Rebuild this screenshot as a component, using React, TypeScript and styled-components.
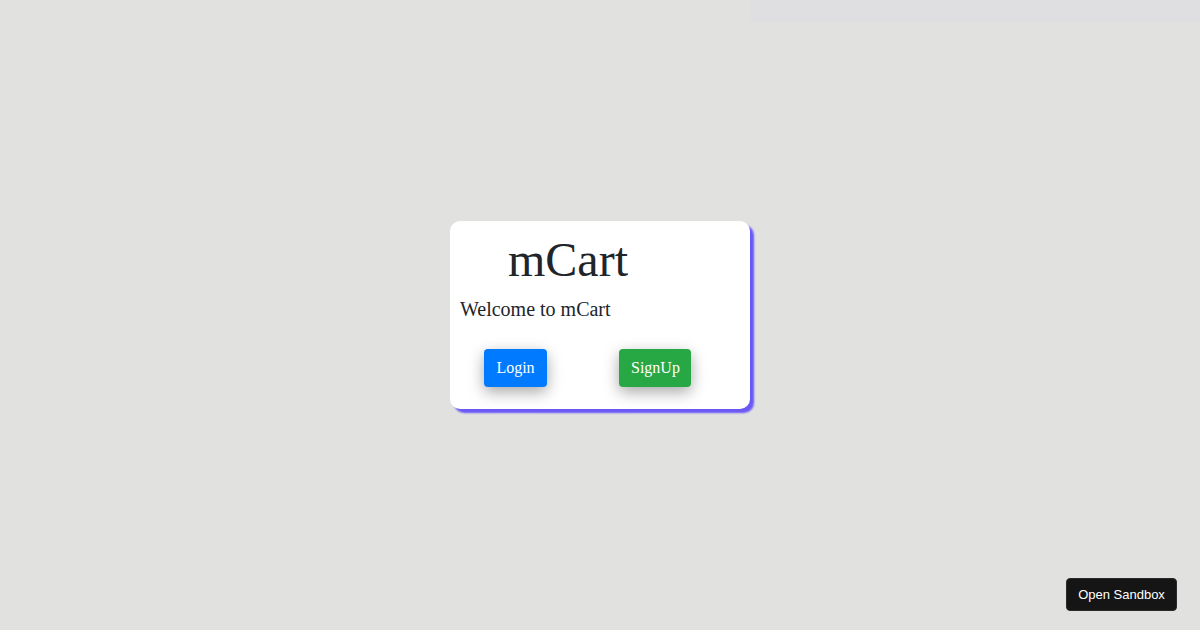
import React from "react";
import styled, { createGlobalStyle } from "styled-components";

const Global = createGlobalStyle`
  html, body { margin: 0; padding: 0; }
  body {
    background: #e1e1e0;
    font-family: "Liberation Serif", "Times New Roman", serif;
    width: 1200px;
    height: 630px;
    overflow: hidden;
  }
`;

const Page = styled.div`
  position: relative;
  width: 1200px;
  height: 630px;
  display: flex;
  align-items: flex-start;
  justify-content: center;
  padding-top: 221px;
  box-sizing: border-box;
`;

const TopStrip = styled.div`
  position: absolute;
  top: 0;
  left: 751px;
  right: 0;
  height: 22px;
  background: #dfdfe1;
`;

const Card = styled.div`
  width: 300px;
  height: 188px;
  box-sizing: border-box;
  background: #ffffff;
  border-radius: 10px;
  box-shadow: 4px 4px 2px #6a58f5;
  padding: 12px 10px 0 10px;
  display: flex;
  flex-direction: column;
`;

const Title = styled.h1`
  margin: 0 0 12px 48px;
  font-size: 48px;
  font-weight: 400;
  line-height: 53px;
  color: #212529;
`;

const Welcome = styled.p`
  margin: 0;
  font-size: 20px;
  line-height: 22px;
  color: #212529;
`;

const Actions = styled.div`
  display: flex;
  gap: 72px;
  padding-left: 24px;
  margin-top: 29px;
`;

const Btn = styled.button<{ $bg: string }>`
  border: 0;
  border-radius: 4px;
  background: ${(p) => p.$bg};
  color: #ffffff;
  font-family: "Liberation Serif", "Times New Roman", serif;
  font-size: 16px;
  line-height: 18px;
  height: 38px;
  padding: 0 12px;
  box-shadow: 0 5px 15px rgba(0, 0, 0, 0.35);
  cursor: pointer;
`;

const Sandbox = styled.button`
  position: absolute;
  right: 23px;
  bottom: 19px;
  width: 111px;
  height: 33px;
  border: 1px solid #2a2a2a;
  border-radius: 4px;
  background: #151515;
  color: #ffffff;
  font-family: "Liberation Sans", Arial, sans-serif;
  font-size: 13px;
  padding: 0;
`;

export default function App() {
  return (
    <>
      <Global />
      <Page>
        <TopStrip />
        <Card>
          <Title>mCart</Title>
          <Welcome>Welcome to mCart</Welcome>
          <Actions>
            <Btn $bg="#007bff" style={{ width: 63 }}>Login</Btn>
            <Btn $bg="#28a745" style={{ width: 72 }}>SignUp</Btn>
          </Actions>
        </Card>
        <Sandbox>Open Sandbox</Sandbox>
      </Page>
    </>
  );
}
